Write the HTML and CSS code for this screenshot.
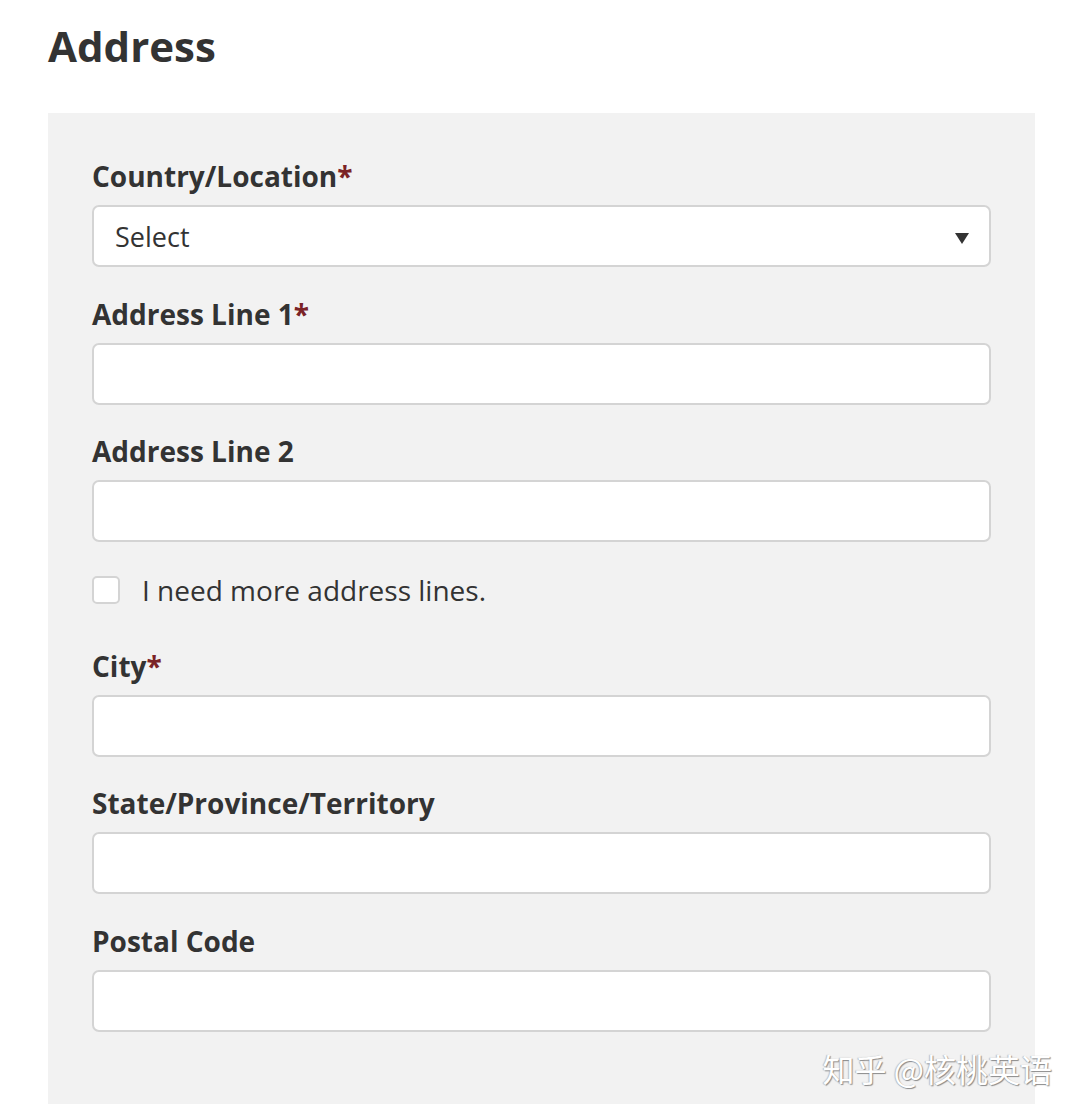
FILE: index.html
```html
<!DOCTYPE html>
<html lang="en">
<head>
  <meta charset="UTF-8" />
  <title>Address</title>
  <link rel="stylesheet" href="styles.css">
</head>
<body>
  <h1 class="title">Address</h1>

  <div class="panel">
    <div class="field">
      <label class="label">Country/Location<span class="req">*</span></label>
      <div class="select">
        <span>Select</span>
        <span class="arrow"></span>
      </div>
    </div>

    <div class="field">
      <label class="label">Address Line 1<span class="req">*</span></label>
      <div class="input"></div>
    </div>

    <div class="field">
      <label class="label">Address Line 2</label>
      <div class="input"></div>
    </div>

    <div class="check">
      <span class="box"></span>
      <span>I need more address lines.</span>
    </div>

    <div class="field">
      <label class="label">City<span class="req">*</span></label>
      <div class="input"></div>
    </div>

    <div class="field">
      <label class="label">State/Province/Territory</label>
      <div class="input"></div>
    </div>

    <div class="field last">
      <label class="label">Postal Code</label>
      <div class="input"></div>
    </div>

    <div class="watermark">知乎 @核桃英语</div>
  </div>
</body>
</html>
```

FILE: styles.css
```css
* {
  box-sizing: border-box;
}

body {
  margin: 0;
  padding: 0 45px 0 48px;
  font-family: "Open Sans", "Noto Sans", sans-serif;
  color: #333;
  background: #fff;
}

.title {
  margin: 0;
  padding-top: 18px;
  height: 113px;
  font-size: 42px;
  font-weight: 700;
  line-height: 56px;
  color: #333;
}

.panel {
  position: relative;
  background: #f2f2f2;
  padding: 46px 44px 72px;
}

.field {
  margin-bottom: 29.5px;
}

.field.last {
  margin-bottom: 0;
}

.label {
  display: block;
  font-size: 28px;
  font-weight: 700;
  line-height: 34px;
  margin-bottom: 12px;
}

.req {
  color: #7b2326;
}

.input,
.select {
  height: 62px;
  background: #fff;
  border: 2px solid #d4d4d4;
  border-radius: 7px;
}

.select {
  display: flex;
  align-items: center;
  justify-content: space-between;
  padding: 0 20px 0 21px;
  font-size: 27px;
}

.arrow {
  width: 0;
  height: 0;
  border-left: 7px solid transparent;
  border-right: 7px solid transparent;
  border-top: 11px solid #333;
  margin-top: 4px;
}

.check {
  display: flex;
  align-items: center;
  gap: 22px;
  margin: 1px 0 41px;
  font-size: 28px;
  line-height: 36px;
}

.box {
  width: 28px;
  height: 28px;
  background: #fff;
  border: 2px solid #d4d4d4;
  border-radius: 5px;
}

.watermark {
  position: absolute;
  right: -17px;
  bottom: 14px;
  font-family: "Noto Sans CJK SC", sans-serif;
  font-size: 32px;
  line-height: 44px;
  color: #fff;
  text-shadow: 1px 1px 1px #8a8a8a, -1px 0 1px #bbb;
}
```
